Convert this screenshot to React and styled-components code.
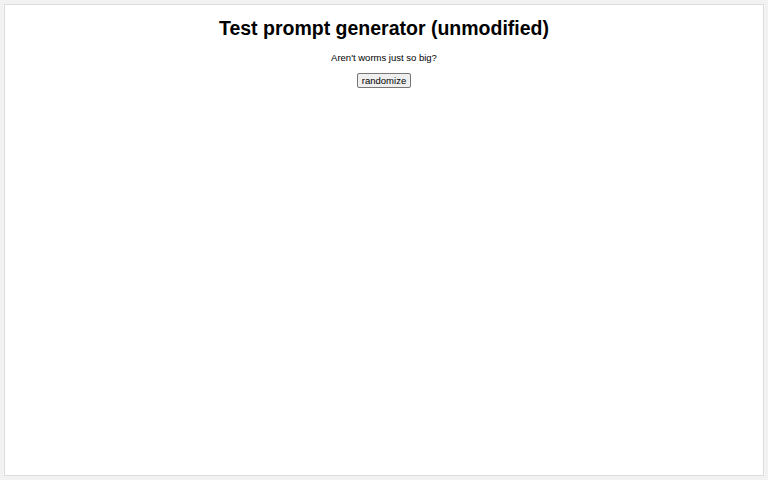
import React, { useState } from "react";
import styled, { createGlobalStyle } from "styled-components";

const Global = createGlobalStyle`
  html, body { margin: 0; padding: 0; height: 100%; }
  body { background: #f2f2f2; font-family: "Liberation Sans", Arial, sans-serif; }
  #root { height: 100%; }
`;

const Page = styled.div`
  box-sizing: border-box;
  height: 480px;
  padding: 4px;
  display: flex;
`;

const Panel = styled.main`
  flex: 1;
  background: #ffffff;
  border: 1px solid #dcdcdc;
  display: flex;
  flex-direction: column;
  align-items: center;
  padding-top: 11px;
`;

const Title = styled.h1`
  margin: 0;
  font-size: 19.5px;
  font-weight: bold;
  color: #000;
  line-height: 24px;
`;

const Prompt = styled.p`
  margin: 12px 0 0;
  font-size: 9.5px;
  line-height: 12px;
  color: #000;
`;

const Button = styled.button`
  margin-top: 9px;
  font-family: "Liberation Sans", Arial, sans-serif;
  font-size: 9.5px;
  line-height: 12px;
  padding: 0 4px;
  height: 15px;
  background: #efefef;
  border: 1px solid #767676;
  border-radius: 2px;
  color: #000;
`;

const prompts = [
  "Aren't worms just so big?",
  "What if clouds were made of soup?",
  "Do owls ever get bored at night?",
];

export default function App() {
  const [i, setI] = useState(0);
  return (
    <>
      <Global />
      <Page>
        <Panel>
          <Title>Test prompt generator (unmodified)</Title>
          <Prompt>{prompts[i]}</Prompt>
          <Button onClick={() => setI((i + 1) % prompts.length)}>randomize</Button>
        </Panel>
      </Page>
    </>
  );
}
